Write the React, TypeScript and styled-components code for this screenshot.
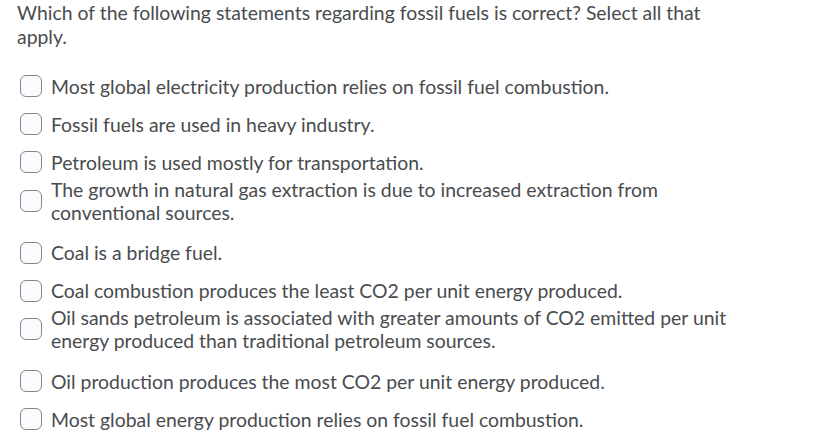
import styled, { createGlobalStyle } from "styled-components";

const GlobalStyle = createGlobalStyle`
  body {
    margin: 0;
    background: #fff;
    font-family: Lato, "Liberation Sans", sans-serif;
    color: #494c4e;
  }
`;

const options = [
  { text: "Most global electricity production relies on fossil fuel combustion." },
  { text: "Fossil fuels are used in heavy industry." },
  { text: "Petroleum is used mostly for transportation." },
  {
    text: "The growth in natural gas extraction is due to increased extraction from conventional sources.",
    wrapped: true,
  },
  { text: "Coal is a bridge fuel." },
  { text: "Coal combustion produces the least CO2 per unit energy produced." },
  {
    text: "Oil sands petroleum is associated with greater amounts of CO2 emitted per unit energy produced than traditional petroleum sources.",
    wrapped: true,
  },
  { text: "Oil production produces the most CO2 per unit energy produced." },
  { text: "Most global energy production relies on fossil fuel combustion." },
];

const App = () => {
  return (
    <Page>
      <GlobalStyle />
      <Question>
        Which of the following statements regarding fossil fuels is correct? Select all that apply.
      </Question>
      <OptionList>
        {options.map((option) => (
          <Option key={option.text} $wrapped={option.wrapped}>
            <Checkbox type="checkbox" />
            <OptionText>{option.text}</OptionText>
          </Option>
        ))}
      </OptionList>
    </Page>
  );
};

const Page = styled.div`
  width: 824px;
  height: 443px;
  box-sizing: border-box;
  padding: 1px 0 0 17px;
  overflow: hidden;
`;

const Question = styled.p`
  margin: 0;
  width: 715px;
  font-size: 19.4px;
  line-height: 24px;
`;

const OptionList = styled.div`
  display: flex;
  flex-direction: column;
  margin-top: 18px;
`;

const Option = styled.label<{ $wrapped?: boolean }>`
  display: flex;
  align-items: center;
  gap: 9px;
  padding: 7.5px 0 7.5px 3px;
  margin: ${(p) => (p.$wrapped ? "-11px 0 2.5px" : "0")};
`;

const Checkbox = styled.input`
  appearance: none;
  flex: none;
  margin: 0;
  width: 22px;
  height: 22px;
  box-sizing: border-box;
  border: 1px solid #868686;
  border-radius: 6px;
  background: #f9fbff;
`;

const OptionText = styled.span`
  width: 690px;
  font-size: 19.4px;
  line-height: 23px;
`;

export default App;
